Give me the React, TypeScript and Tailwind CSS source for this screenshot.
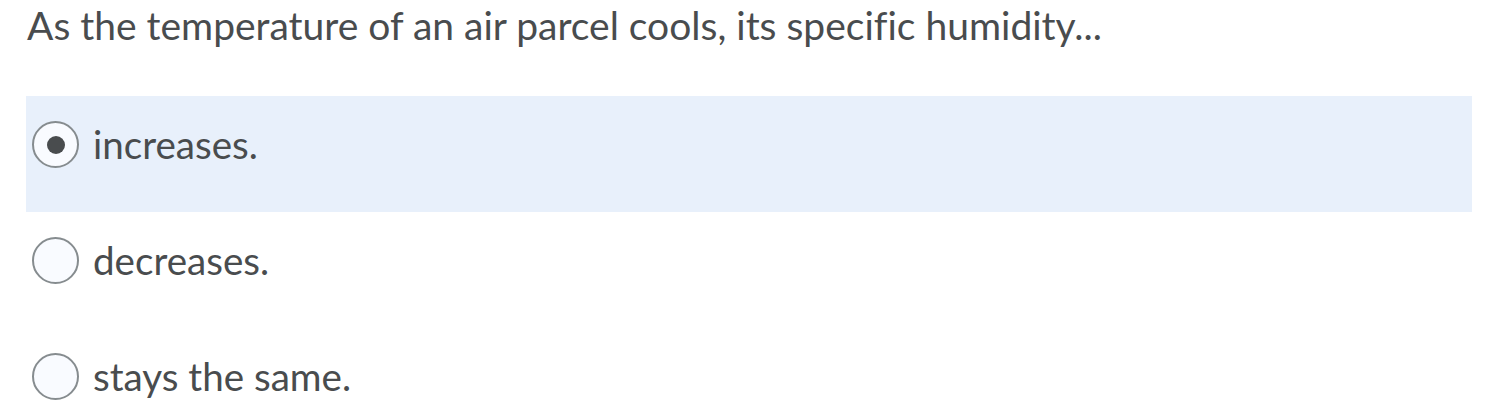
const options = [
  { label: "increases.", checked: true },
  { label: "decreases.", checked: false },
  { label: "stays the same.", checked: false },
];

const Radio = ({ checked }: { checked: boolean }) => (
  <span className="flex h-[47px] w-[47px] shrink-0 items-center justify-center rounded-full border-2 border-[#868c8f] bg-[#f9fbff]">
    {checked && <span className="h-[18px] w-[18px] rounded-full bg-[#494c4e]" />}
  </span>
);

export default function App() {
  return (
    <div className="h-[418px] w-full overflow-hidden bg-white font-['Lato',sans-serif] text-[#494c4e] [font-variant-ligatures:none]">
      <h1 className="pl-[27px] pt-[1px] text-[39px] leading-[48px]">
        As the temperature of an air parcel cools, its specific humidity...
      </h1>
      <div className="mt-[47px] pl-[26px] pr-[40px]">
        {options.map((o) => (
          <label
            key={o.label}
            className={`flex h-[116px] items-start gap-[14px] pl-[6px] pt-[25px] ${
              o.checked ? "bg-[#e8f0fb]" : ""
            }`}
          >
            <Radio checked={o.checked} />
            <span className="text-[38.6px] leading-[47px]">{o.label}</span>
          </label>
        ))}
      </div>
    </div>
  );
}
